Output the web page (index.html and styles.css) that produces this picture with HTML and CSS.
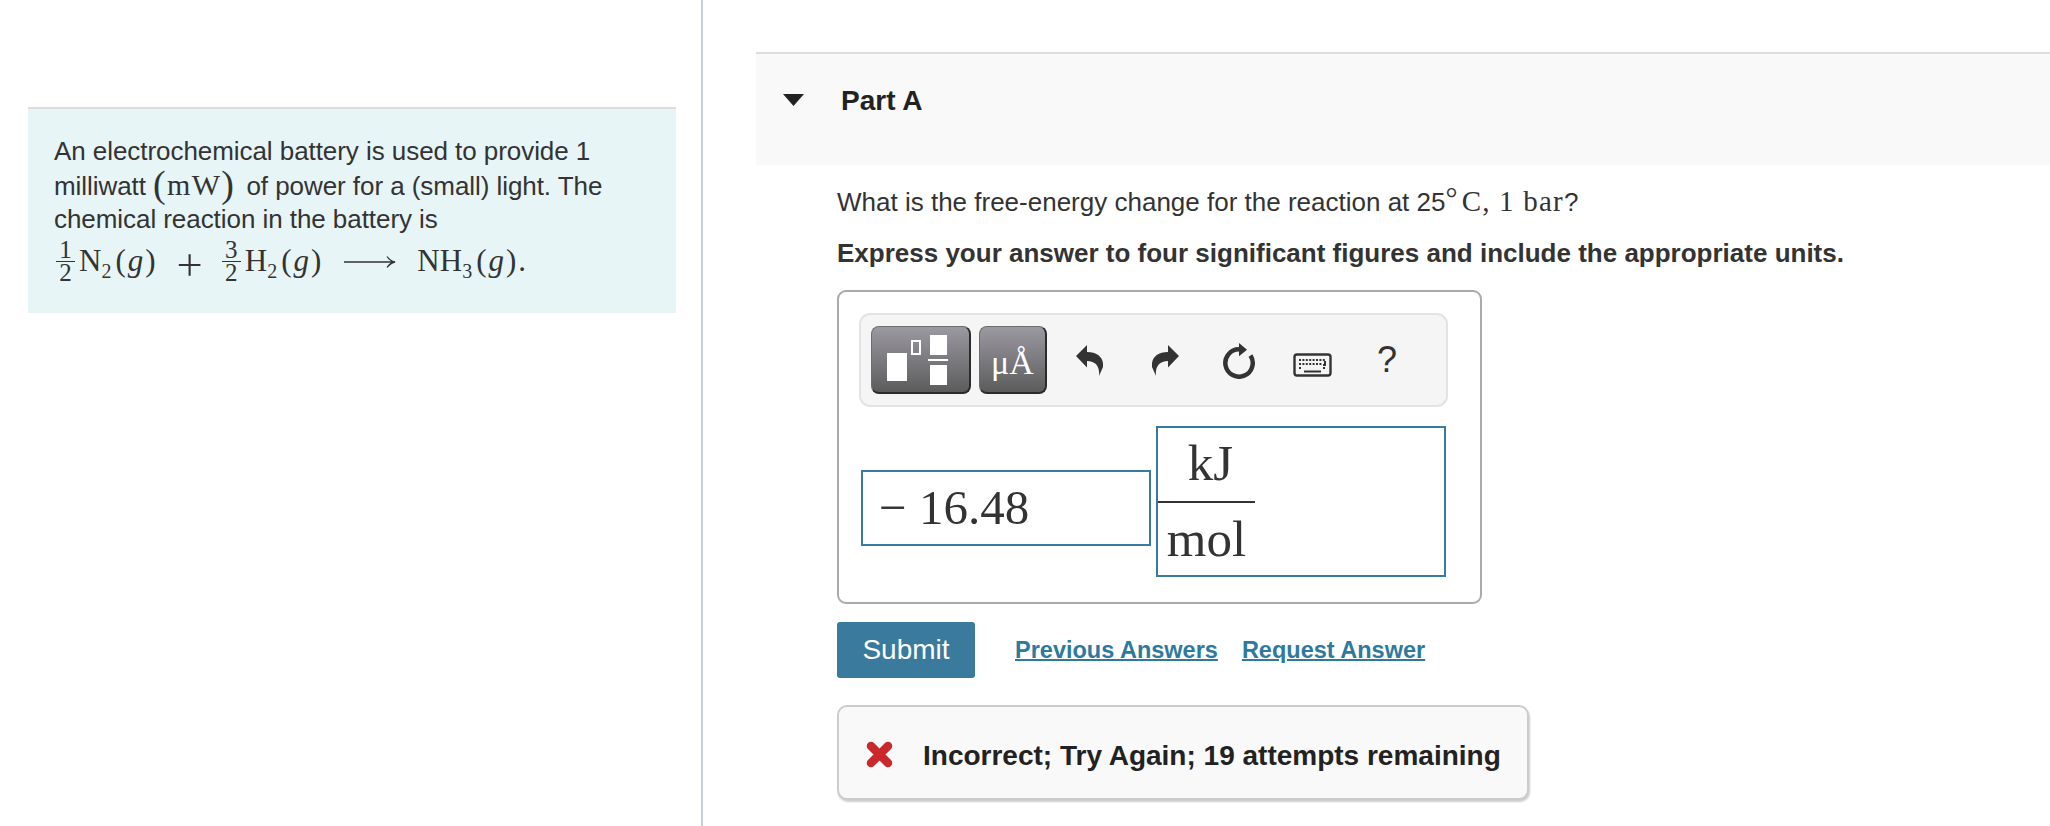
FILE: index.html
```html
<!DOCTYPE html>
<html lang="en">
<head>
    <meta charset="UTF-8">
    <title>Part A</title>
    <link rel="stylesheet" href="styles.css">
</head>
<body>
<div class="page">
    <div class="left-pane">
        <div class="intro-card">
            <div class="intro-line">An electrochemical battery is used to provide 1</div>
            <div class="intro-line">milliwatt <span class="math intro-math"><span class="paren">(</span>mW<span class="paren">)</span></span> of power for a (small) light. The</div>
            <div class="intro-line">chemical reaction in the battery is</div>
            <div class="equation">
                <span class="frac"><span class="frac-top">1</span><span>2</span></span><span>N<sub>2</sub><span class="gas">(<i>g</i>)</span></span>
                <span class="plus">+</span>
                <span class="frac"><span class="frac-top">3</span><span>2</span></span><span>H<sub>2</sub><span class="gas">(<i>g</i>)</span></span>
                <svg class="long-arrow" width="52" height="14" viewBox="0 0 52 14"><path d="M0 7H50M43 1.5C45 4.5 47 6 51 7C47 8 45 9.5 43 12.5" fill="none" stroke="#333" stroke-width="1.3"/></svg>
                <span>NH<sub>3</sub><span class="gas">(<i>g</i>).</span></span>
            </div>
        </div>
    </div>

    <div class="right-pane">
        <div class="part-header">
            <svg class="part-caret" width="21" height="12" viewBox="0 0 21 12"><path d="M0 0H21L10.5 12Z" fill="#222"/></svg>
            <span class="part-title">Part A</span>
        </div>

        <div class="part-body">
            <p class="question">What is the free-energy change for the reaction at 25<span class="math question-math"><span class="deg">°</span>C, 1 bar</span>?</p>
            <p class="instruction">Express your answer to four significant figures and include the appropriate units.</p>

            <div class="answer-box">
                <div class="toolbar">
                    <div class="tool-btn tool-templates">
                        <svg width="61" height="50" viewBox="0 0 61 50">
                            <rect x="0" y="18" width="20" height="28" fill="#fff"/>
                            <rect x="25" y="6" width="8" height="13" fill="none" stroke="#fff" stroke-width="2"/>
                            <rect x="43" y="0" width="17" height="20" fill="#fff"/>
                            <rect x="41" y="24" width="20" height="2" fill="#fff"/>
                            <rect x="43" y="30" width="17" height="20" fill="#fff"/>
                        </svg>
                    </div>
                    <div class="tool-btn tool-units">μÅ</div>
                    <div class="tool-slot">
                        <svg width="27" height="31" viewBox="0 0 27 31"><path d="M0 11L11 0V7C22 7 28 13 27 22L23 31C24 22 20 16 11 16V22.5Z" fill="#333"/></svg>
                    </div>
                    <div class="tool-slot tool-redo">
                        <svg width="27" height="31" viewBox="0 0 27 31"><path d="M27 11L16 0V7C5 7 -1 13 0 22L4 31C3 22 7 16 16 16V22.5Z" fill="#333"/></svg>
                    </div>
                    <div class="tool-slot tool-reset">
                        <svg width="33" height="36" viewBox="0 0 33 36"><path d="M16 6.3A13.7 13.7 0 1 0 27.5 12.5" fill="none" stroke="#333" stroke-width="4.5"/><path d="M16 0L24 6.7L16 13.3Z" fill="#333"/></svg>
                    </div>
                    <div class="tool-slot tool-keyboard">
                        <svg width="39" height="24" viewBox="0 0 39 24">
                            <rect x="1.5" y="1.5" width="36" height="21" rx="2.5" fill="none" stroke="#333" stroke-width="2.4"/>
                            <path d="M6 7H33M6 11H29M6 15H9M30 15H33" fill="none" stroke="#333" stroke-width="2" stroke-dasharray="2 1.4"/>
                            <path d="M32 8V12H30M11 18.5H28" fill="none" stroke="#333" stroke-width="2"/>
                        </svg>
                    </div>
                    <div class="tool-slot tool-help">?</div>
                </div>

                <div class="answer-row">
                    <div class="answer-input value-input">− 16.48</div>
                    <div class="answer-input units-input">
                        <div class="unit-frac">
                            <div class="unit-top">kJ</div>
                            <div class="unit-bottom">mol</div>
                        </div>
                    </div>
                </div>
            </div>

            <div class="actions">
                <button class="submit-btn">Submit</button>
                <a class="action-link" href="#">Previous Answers</a>
                <a class="action-link" href="#">Request Answer</a>
            </div>

            <div class="feedback">
                <svg class="feedback-icon" width="27" height="27" viewBox="0 0 27 27"><path d="M5 5L22 22M22 5L5 22" stroke="#c9282d" stroke-width="8.5" stroke-linecap="round"/></svg>
                <span class="feedback-text">Incorrect; Try Again; 19 attempts remaining</span>
            </div>
        </div>
    </div>
</div>
</body>
</html>
```

FILE: styles.css
```css
html, body {
    margin: 0;
    height: 826px;
    overflow: hidden;
    background-color: #ffffff;
}
body {
    font-family: 'Liberation Sans', Arial, sans-serif;
    color: #333333;
}
.page {
    display: flex;
    height: 826px;
}
.left-pane {
    width: 703px;
    flex-shrink: 0;
    box-sizing: border-box;
    border-right: 2px solid #c6d0d9;
    padding: 107px 0 0 28px;
}
.intro-card {
    width: 648px;
    height: 206px;
    box-sizing: border-box;
    background-color: #e7f5f7;
    border-top: 2px solid #dddddd;
    padding: 25px 0 0 26px;
    font-size: 26px;
}
.intro-line {
    height: 34px;
    line-height: 34px;
    white-space: nowrap;
    letter-spacing: -0.06px;
}
.math {
    font-family: 'Liberation Serif', 'Times New Roman', serif;
    letter-spacing: 0;
}
.intro-math {
    font-size: 30px;
    letter-spacing: 1.3px;
    margin-right: 4px;
}
.paren {
    font-size: 38px;
    font-weight: 400;
    vertical-align: -2px;
    line-height: 0;
}
.equation {
    display: flex;
    align-items: center;
    height: 44px;
    font-family: 'Liberation Serif', 'Times New Roman', serif;
    font-size: 31px;
    white-space: nowrap;
    padding-top: 3px;
}
.equation sub {
    font-size: 20px;
    line-height: 0;
}
.gas {
    margin-left: 4px;
    letter-spacing: 2px;
}
.frac {
    display: inline-flex;
    flex-direction: column;
    align-items: center;
    font-size: 25px;
    line-height: 22px;
    width: 19px;
    margin: 0 4px 0 2px;
}
.frac-top {
    border-bottom: 1.5px solid #333333;
    width: 100%;
    text-align: center;
}
.plus {
    margin: 0 14px 0 16px;
    font-family: Inter, 'Liberation Sans', sans-serif;
    font-size: 50px;
    font-weight: 200;
    line-height: 1;
}
.long-arrow {
    margin: 2px 21px 0 21px;
}
.right-pane {
    flex: 1;
    padding: 52px 0 0 53px;
    min-width: 0;
}
.part-header {
    display: flex;
    align-items: flex-start;
    height: 113px;
    box-sizing: border-box;
    background-color: #f9f9f9;
    border-top: 2px solid #dddddd;
    padding-top: 39px;
    padding-left: 27px;
}
.part-caret {
    margin-top: 1px;
}
.part-title {
    margin-left: 37px;
    font-size: 28px;
    font-weight: 700;
    line-height: 16px;
    color: #222222;
}
.part-body {
    margin-left: 81px;
}
.question {
    margin: 20px 0 0 0;
    font-size: 26px;
    line-height: 32px;
    white-space: nowrap;
}
.question-math {
    font-size: 29px;
    letter-spacing: 1.2px;
}
.deg {
    font-size: 30px;
    line-height: 0;
    margin-right: 3px;
    vertical-align: 3px;
}
.instruction {
    margin: 19px 0 0 0;
    font-size: 26px;
    line-height: 32px;
    font-weight: 700;
}
.answer-box {
    width: 645px;
    height: 314px;
    box-sizing: border-box;
    margin-top: 21px;
    border: 2px solid #aaaaaa;
    border-radius: 9px;
    padding: 21px 0 0 20px;
}
.toolbar {
    display: flex;
    align-items: center;
    width: 589px;
    height: 94px;
    box-sizing: border-box;
    background-color: #f5f5f5;
    border: 2px solid #e3e3e3;
    border-radius: 11px;
    padding-left: 10px;
}
.tool-btn {
    display: flex;
    align-items: center;
    justify-content: center;
    height: 68px;
    box-sizing: border-box;
    border-radius: 8px;
    background: linear-gradient(#9b99a1, #5c5c5c);
    border: 1px solid #6d6d6d;
    border-right: 2px solid #2b2b2b;
    border-bottom: 2px solid #2b2b2b;
    color: #ffffff;
}
.tool-templates {
    width: 100px;
    margin-right: 8px;
}
.tool-templates svg {
    margin-right: 7px;
}
.tool-units {
    width: 68px;
    margin-right: 5px;
    font-family: 'Liberation Serif', 'Times New Roman', serif;
    font-size: 34px;
    padding-top: 6px;
}
.tool-slot {
    display: flex;
    align-items: center;
    justify-content: center;
    width: 74px;
    height: 68px;
}
.tool-redo svg {
    margin-left: 5px;
}
.tool-reset svg {
    margin: 2px 0 0 4px;
}
.tool-keyboard svg {
    margin: 10px 0 0 3px;
}
.tool-help {
    font-size: 36px;
    color: #333333;
    padding-left: 2px;
}
.answer-row {
    display: flex;
    align-items: flex-start;
    margin-top: 19px;
    height: 151px;
}
.answer-input {
    box-sizing: border-box;
    width: 290px;
    border: 2px solid #3a7a9c;
    font-family: 'Liberation Serif', 'Times New Roman', serif;
    color: #333333;
}
.value-input {
    height: 76px;
    margin-top: 44px;
    margin-left: 2px;
    font-size: 49px;
    line-height: 72px;
    padding-left: 16px;
}
.units-input {
    height: 151px;
    margin-left: 5px;
    font-size: 51px;
}
.unit-frac {
    width: 97px;
    text-align: center;
}
.unit-top {
    height: 75px;
    line-height: 70px;
    border-bottom: 2px solid #333333;
    box-sizing: border-box;
    padding-left: 8px;
}
.unit-bottom {
    line-height: 72px;
}
.actions {
    display: flex;
    align-items: center;
    margin-top: 18px;
}
.submit-btn {
    width: 138px;
    height: 56px;
    border: none;
    border-radius: 3px;
    background-color: #3a7a9c;
    color: #ffffff;
    font-family: 'Liberation Sans', Arial, sans-serif;
    font-size: 28px;
    padding: 0;
}
.action-link {
    font-size: 23.5px;
    font-weight: 700;
    color: #2e7a9e;
    text-decoration: underline;
    text-decoration-thickness: 2px;
    margin-left: 24px;
}
.action-link:first-of-type {
    margin-left: 40px;
}
.feedback {
    display: flex;
    align-items: center;
    width: 692px;
    height: 95px;
    box-sizing: border-box;
    margin-top: 27px;
    background-color: #f9f9f9;
    border: 2px solid #cccccc;
    border-radius: 10px;
    box-shadow: 1px 2px 2px rgba(0, 0, 0, 0.2);
    padding-left: 27px;
    font-size: 28px;
    font-weight: 700;
    color: #222222;
    white-space: nowrap;
}
.feedback-icon {
    margin: 4px 30px 0 0;
    flex-shrink: 0;
}
.feedback-text {
    padding-top: 6px;
}
```
